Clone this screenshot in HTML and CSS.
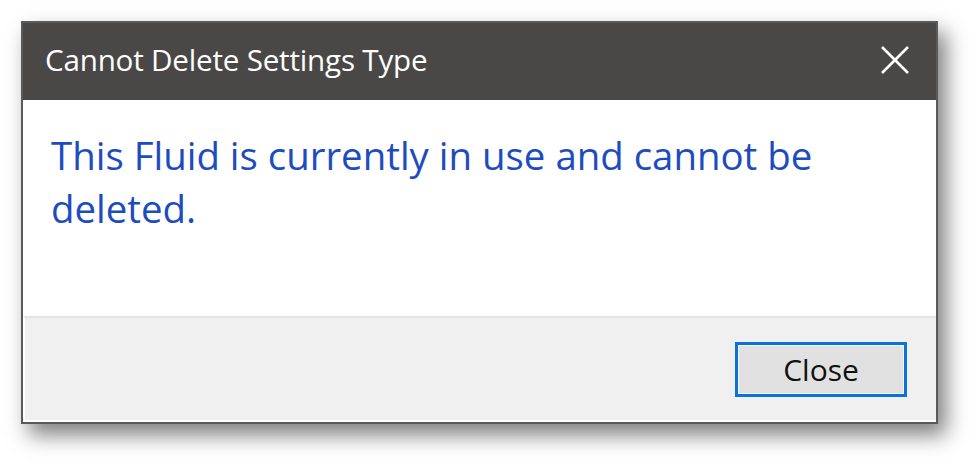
FILE: index.html
```html
<!DOCTYPE html>
<html>
<head>
<meta charset="utf-8">
<link rel="stylesheet" href="styles.css">
</head>
<body>
<div class="page">
  <div class="dialog">
    <div class="titlebar">
      <span class="title">Cannot Delete Settings Type</span>
      <svg class="close-x" width="30" height="28" viewBox="0 0 30 28">
        <path d="M2 1 L28 27 M28 1 L2 27" stroke="#ffffff" stroke-width="2.6" fill="none"/>
      </svg>
    </div>
    <div class="content">
      <p class="message">This Fluid is currently in use and cannot be deleted.</p>
    </div>
    <div class="footer">
      <button class="btn">Close</button>
    </div>
  </div>
</div>
</body>
</html>
```
FILE: styles.css
```css
html, body {
  margin: 0;
  padding: 0;
  background: #ffffff;
}
.page {
  padding: 21px 0 40px 21px;
  min-height: 467px;
  box-sizing: border-box;
}
.dialog {
  width: 913px;
  height: 399px;
  border: 2px solid #5a5a5a;
  background: #ffffff;
  display: flex;
  flex-direction: column;
  box-shadow: 8px 11px 20px rgba(0,0,0,0.5);
  font-family: "Open Sans", "Noto Sans", sans-serif;
}
.titlebar {
  height: 77px;
  background: #4a4846;
  display: flex;
  align-items: center;
  justify-content: space-between;
  padding: 0 26px 0 22px;
  flex-shrink: 0;
}
.title {
  color: #ffffff;
  font-size: 29.6px;
  letter-spacing: -0.2px;
  margin-top: -4px;
}
.close-x {
  display: block;
  margin-top: -4px;
}
.content {
  flex: 1;
  background: #ffffff;
  padding: 29px 20px 0 26px;
  border-left: 2px solid #ffffff;
}
.message {
  margin: 0;
  color: #1d4cbf;
  font-size: 38.4px;
  line-height: 53px;
  width: 820px;
}
.footer {
  height: 106px;
  background: #f0f0f0;
  border-top: 2px solid #e3e3e3;
  border-bottom: 2px solid #ffffff;
  border-left: 2px solid #ffffff;
  display: flex;
  justify-content: flex-end;
  align-items: flex-start;
  padding: 24px 29px 0 0;
  box-sizing: border-box;
  flex-shrink: 0;
}
.btn {
  width: 172px;
  height: 55px;
  border: 3px solid #0a72d8;
  box-shadow: inset 0 0 0 1px #f4f4f4;
  background: #e1e1e1;
  font-family: "Open Sans", "Noto Sans", sans-serif;
  font-size: 30px;
  color: #111111;
  padding: 0;
}
```
